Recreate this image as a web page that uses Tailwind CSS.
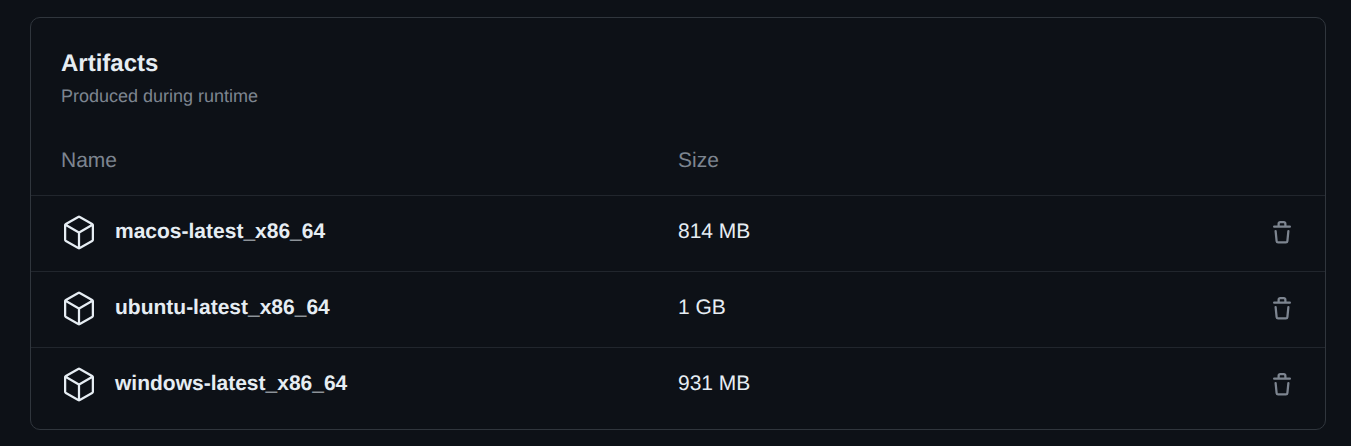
<!DOCTYPE html>
<html lang="en">
<head>
  <meta charset="UTF-8">
  <title>Artifacts</title>
  <script src="https://cdn.jsdelivr.net/npm/@tailwindcss/browser@4"></script>
</head>
<body class="bg-[#0d1117] font-['Liberation_Sans',sans-serif] [text-rendering:geometricPrecision] overflow-hidden">
  <div class="pt-[17px] pl-[30px] pr-[25px]">
    <div class="border border-[#30363d] rounded-[10px] h-[413px]">
      <div class="pl-[30px] pt-[30px]">
        <h2 class="text-[24px] leading-[32px] font-bold text-[#e6edf3]">Artifacts</h2>
        <p class="text-[18px] leading-[24px] mt-[4px] text-[#7d8590]">Produced during runtime</p>
      </div>
      <div class="grid grid-cols-[617px_1fr_auto] items-center h-[69px] mt-[18px] pl-[30px] text-[21px] text-[#7d8590]">
        <span>Name</span>
        <span>Size</span>
      </div>

      <div class="grid grid-cols-[617px_1fr_auto] items-center h-[76px] border-t border-[#21262d] pl-[30px] pr-[31px]">
        <div class="flex items-center gap-[18px]">
          <svg class="w-[36px] h-[36px] -mt-[2px] fill-[#e6edf3]" viewBox="0 0 24 24"><path d="M12.876.64V.639l8.25 4.763c.541.313.875.89.875 1.515v9.525a1.75 1.75 0 0 1-.875 1.516l-8.25 4.762a1.748 1.748 0 0 1-1.75 0l-8.25-4.763a1.75 1.75 0 0 1-.875-1.515V6.917c0-.625.334-1.202.875-1.515L11.126.64a1.748 1.748 0 0 1 1.75 0Zm-1 1.298L4.251 6.34l7.75 4.474 7.75-4.474-7.625-4.402a.248.248 0 0 0-.25 0Zm.875 19.123 7.625-4.402a.25.25 0 0 0 .125-.216V7.639l-7.75 4.474ZM3.501 7.64v8.803c0 .09.048.172.125.216l7.625 4.402v-8.947Z"/></svg>
          <span class="text-[21px] font-bold text-[#e6edf3] -mt-[4px]">macos-latest_x86_64</span>
        </div>
        <span class="text-[21px] text-[#e6edf3] -mt-[4px]">814 MB</span>
        <svg class="w-[24px] h-[24px] -mt-[2px] fill-[#7d8590]" viewBox="0 0 16 16"><path d="M11 1.75V3h2.25a.75.75 0 0 1 0 1.5H2.75a.75.75 0 0 1 0-1.5H5V1.75C5 .784 5.784 0 6.75 0h2.5C10.216 0 11 .784 11 1.75ZM4.496 6.675l.66 6.6a.25.25 0 0 0 .249.225h5.19a.25.25 0 0 0 .249-.225l.66-6.6a.75.75 0 0 1 1.492.149l-.66 6.6A1.748 1.748 0 0 1 10.595 15h-5.19a1.75 1.75 0 0 1-1.741-1.575l-.66-6.6a.75.75 0 1 1 1.492-.15ZM6.5 1.75V3h3V1.75a.25.25 0 0 0-.25-.25h-2.5a.25.25 0 0 0-.25.25Z"/></svg>
      </div>

      <div class="grid grid-cols-[617px_1fr_auto] items-center h-[76px] border-t border-[#21262d] pl-[30px] pr-[31px]">
        <div class="flex items-center gap-[18px]">
          <svg class="w-[36px] h-[36px] -mt-[2px] fill-[#e6edf3]" viewBox="0 0 24 24"><path d="M12.876.64V.639l8.25 4.763c.541.313.875.89.875 1.515v9.525a1.75 1.75 0 0 1-.875 1.516l-8.25 4.762a1.748 1.748 0 0 1-1.75 0l-8.25-4.763a1.75 1.75 0 0 1-.875-1.515V6.917c0-.625.334-1.202.875-1.515L11.126.64a1.748 1.748 0 0 1 1.75 0Zm-1 1.298L4.251 6.34l7.75 4.474 7.75-4.474-7.625-4.402a.248.248 0 0 0-.25 0Zm.875 19.123 7.625-4.402a.25.25 0 0 0 .125-.216V7.639l-7.75 4.474ZM3.501 7.64v8.803c0 .09.048.172.125.216l7.625 4.402v-8.947Z"/></svg>
          <span class="text-[21px] font-bold text-[#e6edf3] -mt-[4px]">ubuntu-latest_x86_64</span>
        </div>
        <span class="text-[21px] text-[#e6edf3] -mt-[4px]">1 GB</span>
        <svg class="w-[24px] h-[24px] -mt-[2px] fill-[#7d8590]" viewBox="0 0 16 16"><path d="M11 1.75V3h2.25a.75.75 0 0 1 0 1.5H2.75a.75.75 0 0 1 0-1.5H5V1.75C5 .784 5.784 0 6.75 0h2.5C10.216 0 11 .784 11 1.75ZM4.496 6.675l.66 6.6a.25.25 0 0 0 .249.225h5.19a.25.25 0 0 0 .249-.225l.66-6.6a.75.75 0 0 1 1.492.149l-.66 6.6A1.748 1.748 0 0 1 10.595 15h-5.19a1.75 1.75 0 0 1-1.741-1.575l-.66-6.6a.75.75 0 1 1 1.492-.15ZM6.5 1.75V3h3V1.75a.25.25 0 0 0-.25-.25h-2.5a.25.25 0 0 0-.25.25Z"/></svg>
      </div>

      <div class="grid grid-cols-[617px_1fr_auto] items-center h-[76px] border-t border-[#21262d] pl-[30px] pr-[31px]">
        <div class="flex items-center gap-[18px]">
          <svg class="w-[36px] h-[36px] -mt-[2px] fill-[#e6edf3]" viewBox="0 0 24 24"><path d="M12.876.64V.639l8.25 4.763c.541.313.875.89.875 1.515v9.525a1.75 1.75 0 0 1-.875 1.516l-8.25 4.762a1.748 1.748 0 0 1-1.75 0l-8.25-4.763a1.75 1.75 0 0 1-.875-1.515V6.917c0-.625.334-1.202.875-1.515L11.126.64a1.748 1.748 0 0 1 1.75 0Zm-1 1.298L4.251 6.34l7.75 4.474 7.75-4.474-7.625-4.402a.248.248 0 0 0-.25 0Zm.875 19.123 7.625-4.402a.25.25 0 0 0 .125-.216V7.639l-7.75 4.474ZM3.501 7.64v8.803c0 .09.048.172.125.216l7.625 4.402v-8.947Z"/></svg>
          <span class="text-[21px] font-bold text-[#e6edf3] -mt-[4px]">windows-latest_x86_64</span>
        </div>
        <span class="text-[21px] text-[#e6edf3] -mt-[4px]">931 MB</span>
        <svg class="w-[24px] h-[24px] -mt-[2px] fill-[#7d8590]" viewBox="0 0 16 16"><path d="M11 1.75V3h2.25a.75.75 0 0 1 0 1.5H2.75a.75.75 0 0 1 0-1.5H5V1.75C5 .784 5.784 0 6.75 0h2.5C10.216 0 11 .784 11 1.75ZM4.496 6.675l.66 6.6a.25.25 0 0 0 .249.225h5.19a.25.25 0 0 0 .249-.225l.66-6.6a.75.75 0 0 1 1.492.149l-.66 6.6A1.748 1.748 0 0 1 10.595 15h-5.19a1.75 1.75 0 0 1-1.741-1.575l-.66-6.6a.75.75 0 1 1 1.492-.15ZM6.5 1.75V3h3V1.75a.25.25 0 0 0-.25-.25h-2.5a.25.25 0 0 0-.25.25Z"/></svg>
      </div>
    </div>
  </div>
</body>
</html>
